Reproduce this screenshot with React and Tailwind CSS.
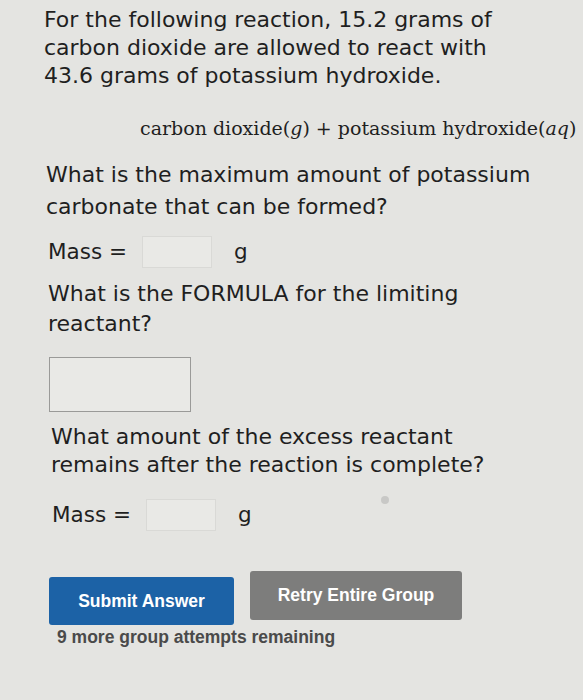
const Field = ({ left }) => (
  <div className={`flex items-center h-[32px] ${left}`}>
    <span>Mass =</span>
    <div className="ml-[15px] w-[70px] h-[32px] bg-[#e9e9e6] border border-[#d9d9d6]"></div>
    <span className="ml-[22px]">g</span>
  </div>
);

export default function App() {
  return (
    <div className="w-[583px] h-[700px] bg-[#e4e4e1] text-[#1f1f1f] font-['DejaVu_Sans',sans-serif] text-[22px] overflow-hidden">
      <p className="pl-[44px] pt-[6px] leading-[28px] whitespace-nowrap">
        For the following reaction, 15.2 grams of
        <br />
        carbon dioxide are allowed to react with
        <br />
        43.6 grams of potassium hydroxide.
      </p>
      <p className="pl-[140px] mt-[24px] leading-[28px] whitespace-nowrap font-['DejaVu_Serif','Liberation_Serif',serif] text-[19px]">
        carbon dioxide(<i>g</i>) + potassium hydroxide(<i>aq</i>)
      </p>
      <p className="pl-[46px] mt-[17px] leading-[32px] whitespace-nowrap">
        What is the maximum amount of potassium
        <br />
        carbonate that can be formed?
      </p>
      <div className="mt-[13px] text-[21.5px]">
        <Field left="pl-[48px]" />
      </div>
      <p className="pl-[48px] mt-[11px] leading-[30px] whitespace-nowrap">
        What is the FORMULA for the limiting
        <br />
        reactant?
      </p>
      <div className="pl-[49px] mt-[18px]">
        <div className="w-[142px] h-[55px] bg-[#e9e9e6] border border-[#9a9a98]"></div>
      </div>
      <p className="pl-[51px] mt-[11px] leading-[28px] whitespace-nowrap">
        What amount of the excess reactant
        <br />
        remains after the reaction is complete?
      </p>
      <div className="relative mt-[20px] text-[21.5px]">
        <Field left="pl-[52px]" />
        <div className="absolute left-[381px] top-[-3px] w-[8px] h-[8px] rounded-full bg-[#c8c8c6]"></div>
      </div>
      <div className="flex items-start gap-[16px] pl-[49px] mt-[40px] font-['Liberation_Sans',sans-serif] font-bold text-[17.5px]">
        <div className="mt-[6px] w-[185px] h-[48px] rounded-[3px] bg-[#1c62a6] text-white flex items-center justify-center">
          Submit Answer
        </div>
        <div className="w-[212px] h-[49px] rounded-[3px] bg-[#7d7d7c] text-white flex items-center justify-center">
          Retry Entire Group
        </div>
      </div>
      <p className="pl-[57px] mt-[2px] leading-[20px] font-['Liberation_Sans',sans-serif] font-bold text-[17.5px] text-[#4a4a4a]">
        9 more group attempts remaining
      </p>
    </div>
  );
}
